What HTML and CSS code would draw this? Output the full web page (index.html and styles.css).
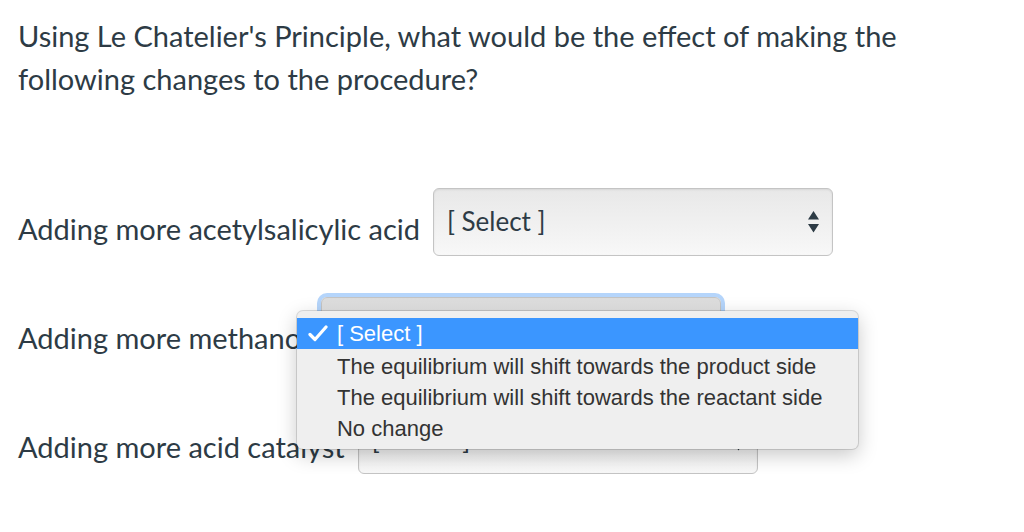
FILE: index.html
```html
<!DOCTYPE html>
<html lang="en">
<head>
<meta charset="utf-8">
<title>Le Chatelier question</title>
<link rel="stylesheet" href="styles.css">
</head>
<body>
<main class="quiz">
  <p class="question">Using Le Chatelier's Principle, what would be the effect of making the following changes to the procedure?</p>
  <div class="answers">
    <div class="row">
      <span class="label">Adding more acetylsalicylic acid</span>
      <div class="select">
        <span class="value">[ Select ]</span>
        <svg class="arrows" width="11" height="22" viewBox="0 0 11 22"><path d="M5.5 0 L11 8.5 L0 8.5 Z M0 13 L11 13 L5.5 21.5 Z" fill="#2d3b45"/></svg>
      </div>
    </div>
    <div class="row">
      <span class="label">Adding more methanol</span>
      <div class="select-wrap">
        <div class="select focused">
          <span class="value">[ Select ]</span>
          <svg class="arrows" width="11" height="22" viewBox="0 0 11 22"><path d="M5.5 0 L11 8.5 L0 8.5 Z M0 13 L11 13 L5.5 21.5 Z" fill="#2d3b45"/></svg>
        </div>
        <ul class="menu">
          <li class="active"><svg class="check" width="20" height="17" viewBox="0 0 20 17"><path d="M2 9.5 L7 14.5 L18 2" fill="none" stroke="#fff" stroke-width="3.2" stroke-linecap="round" stroke-linejoin="round"/></svg>[ Select ]</li>
          <li>The equilibrium will shift towards the product side</li>
          <li>The equilibrium will shift towards the reactant side</li>
          <li>No change</li>
        </ul>
      </div>
    </div>
    <div class="row">
      <span class="label">Adding more acid catalyst</span>
      <div class="select">
        <span class="value">[ Select ]</span>
        <svg class="arrows" width="11" height="22" viewBox="0 0 11 22"><path d="M5.5 0 L11 8.5 L0 8.5 Z M0 13 L11 13 L5.5 21.5 Z" fill="#2d3b45"/></svg>
      </div>
    </div>
  </div>
</main>
</body>
</html>
```

FILE: styles.css
```css
* { box-sizing: border-box; }
body {
  margin: 0;
  background: #fff;
  font-family: Lato, "Open Sans", sans-serif;
  color: #2d3b45;
}
.quiz { padding: 14px 18px 0; }
.question {
  margin: 0;
  font-size: 29px;
  line-height: 43px;
  max-width: 930px;
}
.answers {
  margin-top: 88px;
  display: flex;
  flex-direction: column;
  gap: 41px;
}
.row {
  display: flex;
  align-items: flex-start;
  gap: 13px;
}
.label {
  font-size: 29px;
  line-height: 34px;
  margin-top: 24px;
  white-space: nowrap;
}
.select {
  width: 400px;
  height: 68px;
  border: 1px solid #c4c4c4;
  border-radius: 6px;
  background: linear-gradient(#e8e8e8, #f3f3f3 70%, #f8f8f8);
  box-shadow: inset 0 1px 2px rgba(0,0,0,.08);
  display: flex;
  align-items: center;
  justify-content: space-between;
  padding: 0 13px 0 13px;
  font-size: 26px;
}
.value { margin-top: -2px; }
.select-wrap { position: relative; }
.select.focused {
  background: linear-gradient(#dcdcdc, #ececec 60%, #f4f4f4);
  box-shadow: 0 0 0 4px #b5d5fb;
}
.menu {
  position: absolute;
  left: -24px;
  top: 14px;
  width: 561px;
  margin: 0;
  padding: 7px 0;
  list-style: none;
  background: #efefef;
  border-radius: 6px;
  box-shadow: 0 0 0 1px rgba(0,0,0,.13), 0 6px 20px rgba(0,0,0,.22);
  font-family: "Liberation Sans", Arial, sans-serif;
  font-size: 22px;
  color: #333;
  z-index: 2;
}
.menu li {
  position: relative;
  height: 31px;
  line-height: 35px;
  padding-left: 40px;
}
.menu li.active { background: #3b96ff; color: #fff; line-height: 31px; }
.check { position: absolute; left: 11px; top: 7px; }
```
